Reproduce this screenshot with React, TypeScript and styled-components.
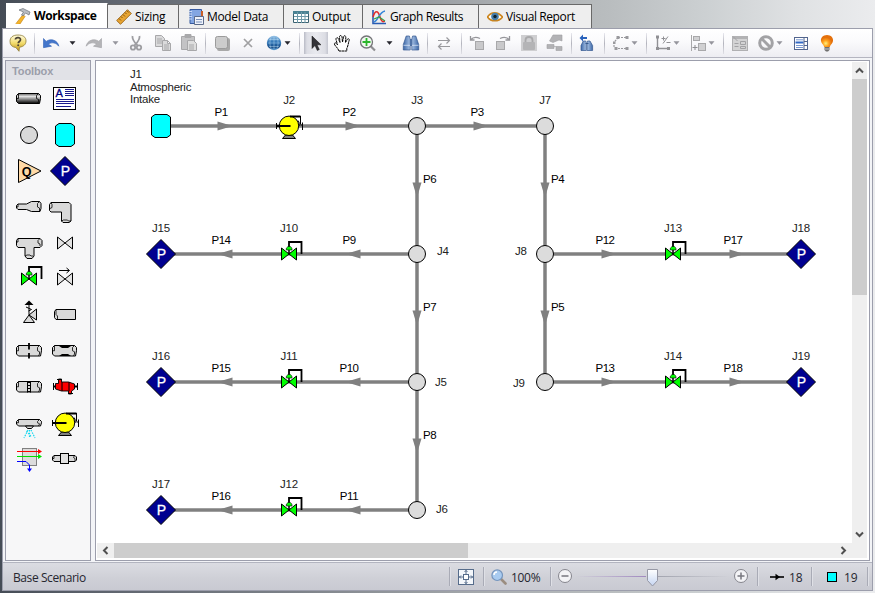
import React from 'react';
import styled, { createGlobalStyle } from 'styled-components';

const GlobalStyle = createGlobalStyle`
  * { box-sizing: border-box; }
  html, body, #root { height: 100%; }
  body { margin: 0; overflow: hidden; font: 12px/16px "Open Sans", "Noto Sans", sans-serif; color: #000; }
  svg { display: block; flex: none; }
`;

const Window = styled.div`
  width: 875px;
  height: 593px;
  padding: 3px 2px 2px;
  display: flex;
  flex-direction: column;
  background: linear-gradient(90deg, #454c56 0, #5c626c 90px, #7e838a 300px, #a9adb0 500px, #b9bdbf 610px, #cbcfd1 700px, #e0e2e4 800px, #ebecee 875px);
`;

const TabStrip = styled.nav`
  height: 25px;
  padding-left: 4px;
  display: flex;
  align-items: flex-end;
  flex: none;
`;

const Tab = styled.button<{ $width: number; $active?: boolean; $pad: number; $tight: number }>`
  width: ${p => p.$width}px;
  height: ${p => (p.$active ? 25 : 24)}px;
  padding: 0 0 0 ${p => p.$pad}px;
  border: 0;
  border-top: 1px solid ${p => (p.$active ? '#fff' : '#696969')};
  border-right: 1px solid #696969;
  background: ${p => (p.$active ? '#fff' : '#eeeeee')};
  display: flex;
  align-items: center;
  gap: 3px;
  font: ${p => (p.$active ? 700 : 400)} 12px/16px "Open Sans", sans-serif;
  letter-spacing: ${p => p.$tight}px;
  white-space: nowrap;
  color: #000;
`;

const Frame = styled.div`
  flex: 1;
  min-height: 0;
  display: flex;
  flex-direction: column;
  border: 1px solid #9c9eac;
  background: #f3f4f7;
`;

const ToolBar = styled.div`
  height: 29px;
  flex: none;
  display: flex;
  align-items: center;
  background: linear-gradient(#ffffff, #fafafc 45%, #ededf2);
  border-bottom: 1px solid #b4b5c0;
`;

const ToolButton = styled.button<{ $gap: number; $width: number; $pressed?: boolean }>`
  margin: 0 0 0 ${p => p.$gap}px;
  padding: 0;
  width: ${p => p.$width}px;
  height: 22px;
  border: 0;
  flex: none;
  display: flex;
  align-items: center;
  justify-content: center;
  background: ${p => (p.$pressed ? 'linear-gradient(90deg, #b9bbc6, #dcdde4 12%, #e9eaef 50%, #dcdde4 88%, #c3c5cf)' : 'none')};
`;

const ToolRule = styled.span<{ $gap: number }>`
  margin-left: ${p => p.$gap}px;
  width: 1px;
  height: 21px;
  flex: none;
  background: linear-gradient(#e8e8ee, #b4b5be, #e0e0e6);
`;

const Body = styled.main`
  flex: 1;
  min-height: 0;
  display: flex;
  gap: 4px;
  padding: 2px 2px 1px;
`;

const Toolbox = styled.aside`
  width: 86px;
  height: 501px;
  border: 1px solid #9c9eac;
  background: #f7f7f8;
  display: flex;
  flex-direction: column;
`;

const ToolboxTitle = styled.h2`
  margin: 0 0 1px;
  height: 19px;
  padding-left: 6px;
  font: 700 11px/20px "Liberation Sans", sans-serif;
  letter-spacing: -0.1px;
  color: #9b9eaa;
  background: #e1e2e7;
`;

const ToolboxGrid = styled.div`
  padding-left: 5px;
  display: grid;
  grid-template-columns: 36px 36px;
  grid-auto-rows: 36px;
`;

const Workspace = styled.section`
  flex: 1;
  min-width: 0;
  height: 501px;
  border: 1px solid #9c9eac;
  padding: 1px 2px 1px 1px;
  background: #fff;
  display: grid;
  grid-template-columns: 755px 15px;
  grid-template-rows: 481px 15px;
`;

const ScrollTrack = styled.div<{ $vertical?: boolean }>`
  background: #efefef;
  display: flex;
  flex-direction: ${p => (p.$vertical ? 'column' : 'row')};
  align-items: center;
`;

const ScrollThumb = styled.div<{ $width: number; $height: number }>`
  width: ${p => p.$width}px;
  height: ${p => p.$height}px;
  background: #cdcdcd;
`;

const Spring = styled.span`
  flex: 1;
`;

const Corner = styled.div`
  background: #efefef;
`;

const StatusBar = styled.footer`
  height: 28px;
  flex: none;
  display: flex;
  align-items: center;
  padding-left: 10px;
  border-top: 1px solid #b2b4bf;
  background: linear-gradient(#dbdce2, #cfd0d7 55%, #c9cad2);
  color: #26262f;
`;

const StatusText = styled.span<{ $width: number; $tight?: number }>`
  width: ${p => p.$width}px;
  position: relative;
  top: 1px;
  letter-spacing: ${p => p.$tight ?? -0.3}px;
  white-space: nowrap;
`;

const StatusCell = styled.div<{ $width: number; $pad: number; $gap: number }>`
  width: ${p => p.$width}px;
  height: 19px;
  flex: none;
  padding-left: ${p => p.$pad}px;
  display: flex;
  align-items: center;
  gap: ${p => p.$gap}px;
  border-left: 1px solid #a9abb6;
  box-shadow: inset 1px 0 #dfe0e6;
`;

const disabled = '#a8a8aa';

const toolIcons: Record<string, React.ReactNode> = {
  help: (
    <>
      <path d="M10 2C4.500 2 2 4.600 2 8.500c0 3.300 2 5.600 5.800 6l3.200 3.800.5-4C15.500 13.500 18 11.500 18 8c0-4-3-6-8-6z" fill="url(#gold)" stroke="#8f7e3a" strokeWidth=".8" />
      <path d="M7.400 6.500c.3-2.600 5.200-2.600 5.100.2 0 1.700-2.300 1.900-2.300 3.600" fill="none" stroke="#4a4235" strokeWidth="1.700" />
      <circle cx="10.200" cy="12.300" r="1" fill="#4a4235" />
    </>
  ),
  undo: <path d="M2.500 5.500v9.200l8-1.500-3-2c3-2.400 7.500-1.500 10.300 2C17 7.500 10 4.800 5.200 8.400z" fill="#4376cb" stroke="#2f5fb5" strokeWidth=".6" />,
  redo: <path d="M17.500 5.500v9.200l-8-1.500 3-2c-3-2.400-7.500-1.500-10.300 2C3 7.500 10 4.800 14.800 8.400z" fill="#b4b4b7" stroke="#a0a0a4" strokeWidth=".6" />,
  cut: (
    <g fill="none" stroke="#9d9da1" strokeWidth="1.800">
      <path d="M6.500 3c-.5 3 1.500 6 5 9.500M13.500 3c.5 3-1.500 6-5 9.500" />
      <circle cx="7" cy="14.500" r="2.200" /><circle cx="13" cy="14.500" r="2.200" />
    </g>
  ),
  copy: (
    <g fill="#dadadb" stroke={disabled}>
      <path d="M2.500 2.500h6l3 3v8h-9zM4 6h5M4 8h5M4 10h5" />
      <path d="M9.500 7.500h5l3 3v7h-8zM14.500 7.500v3h3M11 12h5M11 14h5M11 16h5" />
    </g>
  ),
  paste: (
    <g fill="#c3c3c5" stroke={disabled}>
      <path d="M2.500 3.500h13v13h-13z" /><path d="M6 1.500h6v3H6z" fill="#a8a8aa" />
      <path d="M8.500 7.500h6l3 3v7h-9zM10 12h5M10 14h5M10 16h5" fill="#dedede" />
    </g>
  ),
  square: (
    <>
      <rect x="5" y="5" width="13" height="13" rx="2" fill="#a8a8a8" />
      <rect x="3.500" y="3.500" width="12" height="12" rx="2" fill="#ccc" stroke="#9b9b9b" />
    </>
  ),
  remove: <path d="M6 6l8 8M14 6l-8 8" stroke="#a0a0a2" strokeWidth="1.700" />,
  globe: (
    <>
      <circle cx="10" cy="10" r="7.200" fill="url(#globe)" />
      <path d="M3.500 10h13M5 6.500h10M5 13.500h10M10 4v12M7 4.500c-1.500 4-1.500 7 0 11M13 4.500c1.500 4 1.500 7 0 11" fill="none" stroke="#bfe0f6" strokeWidth=".6" opacity=".75" />
    </>
  ),
  pointer: <path d="M6 3v12.500l3-3 2.300 5 2-1-2.300-4.700h4z" fill="#333338" stroke="#111" strokeWidth=".5" />,
  hand: <path d="M7 18c-1-3-4-5-4.700-7 .2-1.800 2-1.300 3.200.8L4 6.500c-.4-2 1.900-2.500 2.400-.7L8 9.500 7.500 4c0-2 2.300-2 2.500 0l.5 5 1-5c.3-2 2.500-1.500 2.300.3L13.500 9.500l1.700-3c.8-1.500 2.500-.8 2 .8-1 3-1 5.500-2.400 8V18z" fill="#fff" stroke="#000" strokeDasharray="2.500 .4" />,
  zoomIn: (
    <>
      <path d="M12.500 13l4.500 4.500" stroke="#8f8f92" strokeWidth="2.200" />
      <circle cx="8.500" cy="9" r="6" fill="#f0f8ef" stroke="#747478" strokeWidth="1.300" />
      <path d="M4.500 9h8M8.500 5v8" stroke="#2bb52b" strokeWidth="1.800" />
    </>
  ),
  binoculars: (
    <g stroke="#34588f" strokeWidth=".7">
      <path d="M8 6.500h4v6H8z" fill="#5d7fb2" />
      <path d="M5.200 3h3.200l.8 3v11H2.300v-5.500zM14.800 3h-3.200l-.8 3v11h6.900v-5.500z" fill="url(#blue)" />
      <path d="M2.500 12.300h6.500M11 12.300h6.500" stroke="#e4eefb" />
    </g>
  ),
  swap: <path d="M4 7.500h11.500M12.500 4.500l3 3-3 3M16 13.500H4.500M7.500 10.500l-3 3 3 3" fill="none" stroke="#99999d" strokeWidth="1.200" />,
  rotateLeft: (
    <>
      <path d="M2.500 3v4h4M2.500 7C5 4 8 3.500 12 5.500" fill="none" stroke="#96969a" strokeWidth="1.300" />
      <rect x="7.500" y="8.500" width="8" height="8" fill="#c9c9cb" stroke={disabled} />
    </>
  ),
  rotateRight: (
    <>
      <path d="M16.500 3v4h-4M16.500 7C14 4 11 3.500 7 5.500" fill="none" stroke="#96969a" strokeWidth="1.300" />
      <rect x="3.500" y="8.500" width="8" height="8" fill="#c9c9cb" stroke={disabled} />
    </>
  ),
  lock: (
    <>
      <rect x="2" y="2" width="16" height="16" fill="#cfcfd1" />
      <path d="M6.500 10V7c0-4 7-4 7 0v3" fill="none" stroke="#a9a9ab" strokeWidth="1.800" />
      <rect x="4" y="9" width="12" height="8" rx="1" fill="#b4b4b6" />
    </>
  ),
  sheet: (
    <g fill="#b2b2b5" stroke="#a0a0a3" strokeWidth=".6">
      <path d="M8 2h9v6l-3-1-6 2.500L4.500 8zM2 11.500h7v4H2zM11 13.500h6v4h-6z" />
      <path d="M9 13.500h2" />
    </g>
  ),
  findPipe: (
    <>
      <path d="M10 4H6V1.500L2.500 5 6 8.500V6h4z" fill="#2a63bc" />
      <path d="M6.200 8h2.600l.5 2V17.500H4v-5zM13 8h-2.500l-.4 2v7.500h5.500v-5z" fill="url(#blue)" stroke="#34588f" strokeWidth=".7" />
      <path d="M8.500 10.500h3" stroke="#34588f" />
    </>
  ),
  polygon: (
    <g stroke="#99999d" fill="none" strokeDasharray="2 1">
      <path d="M7 4.500h9M7 4.500L3 9.500v4l3 2h10" strokeWidth="1.200" />
      <path d="M5.500 3h3v3h-3zM14.500 3h3v3h-3zM2 8.500h2.500V11H2zM3.500 14h3v3h-3zM14.500 14h3v3h-3z" fill="#99999d" stroke="none" />
    </g>
  ),
  angle: (
    <g stroke="#909094" fill="none">
      <path d="M4.500 4v11.500H17" strokeWidth="1.400" />
      <path d="M3 2.500h3v3H3zM3 14h3v3H3zM14 14h3v3h-3z" fill="#909094" stroke="none" />
      <path d="M8.500 5.500h4M10.500 3.500v4M10 10.500l5-7M13.500 9.500h4" />
    </g>
  ),
  align: (
    <g stroke={disabled} fill="#d0d0d2">
      <path d="M3.500 2v16" /><rect x="5.500" y="3.500" width="6" height="4" /><rect x="10.500" y="10.500" width="7" height="7" />
      <path d="M4.500 14.500h5M7 12v5" stroke="#8e8e92" />
    </g>
  ),
  panel: (
    <>
      <rect x="2.500" y="3.500" width="15" height="14" fill="#d3d3d4" stroke="#b0b0b2" />
      <path d="M2 3h16v3H2z" fill="#b2b2b4" />
      <path d="M3 3.500l4.500 4.500M4.500 10.500h4M4.500 13.500h4M10.500 8.500h5v3h-5zM10.500 13.500h5v2h-5z" fill="none" stroke="#a2a2a5" />
    </>
  ),
  forbid: (
    <g fill="none" stroke="#a2a2a5" strokeWidth="3">
      <circle cx="10" cy="10" r="6.300" /><path d="M5.500 5.500l9 9" />
    </g>
  ),
  list: (
    <>
      <rect x="3.500" y="4.500" width="13" height="12" fill="#fff" stroke="#52658e" />
      <path d="M5 6.800h7M5 12.500h7M5 14.500h7" stroke="#7796cf" />
      <path d="M4.500 8.500h8v2h-8z" fill="#3268c4" /><path d="M13 4.500v12M13 8.500h4M13 12.500h4" stroke="#52658e" />
    </>
  ),
  bulb: (
    <>
      <path d="M7.500 13h5v4l-1.500 1.500H9L7.500 17z" fill="#6f6f6f" />
      <path d="M10 2c-4 0-6.500 2.800-6 6 .4 2.500 2.500 3.500 3.200 6h5.600c.7-2.500 2.800-3.500 3.200-6C16.500 4.800 14 2 10 2z" fill="url(#bulb)" />
      <path d="M8 16h4" stroke="#ddd" strokeWidth=".8" />
    </>
  ),
};

type ToolItem = [kind: string, gap: number];
const tools: ToolItem[] = [
  ['help', 5], ['|', 6], ['undo', 6], ['v', 8], ['redo', 8], ['vd', 8], ['cut', 7], ['copy', 7], ['paste', 6], ['|', 6],
  ['square', 6], ['remove', 6], ['globe', 6], ['v', 0], ['|', 8], ['pointer', 4], ['hand', 4], ['zoomIn', 6], ['v', 8],
  ['binoculars', 8], ['|', 6], ['swap', 6], ['|', 7], ['rotateLeft', 6], ['rotateRight', 5], ['lock', 6], ['sheet', 6],
  ['|', 6], ['findPipe', 5], ['|', 7], ['polygon', 6], ['vd', 0], ['|', 8], ['angle', 6], ['vd', 0], ['align', 8],
  ['vd', 0], ['|', 8], ['panel', 6], ['forbid', 6], ['vd', 0], ['list', 8], ['bulb', 6],
];

const GradientDefs = styled.svg`
  position: absolute;
`;

const Gradients = () => (
  <GradientDefs width="0" height="0">
    <defs>
      <linearGradient id="gold" x2="0" y2="1"><stop stopColor="#fffbe0" /><stop offset=".5" stopColor="#f2dc6c" /><stop offset="1" stopColor="#b98d16" /></linearGradient>
      <linearGradient id="globe" x2="0" y2="1"><stop stopColor="#9cc6e8" /><stop offset=".45" stopColor="#2b72b4" /><stop offset=".8" stopColor="#1a4f8a" /><stop offset="1" stopColor="#69aee0" /></linearGradient>
      <linearGradient id="blue"><stop stopColor="#3d68a8" /><stop offset=".5" stopColor="#b5cdec" /><stop offset="1" stopColor="#3d68a8" /></linearGradient>
      <radialGradient id="bulb" cx=".4" cy=".7"><stop stopColor="#fff07a" /><stop offset=".5" stopColor="#ffa21e" /><stop offset="1" stopColor="#e4700c" /></radialGradient>
      <linearGradient id="steel" x2="0" y2="1"><stop stopColor="#666" /><stop offset=".3" stopColor="#e0e0e0" /><stop offset="1" stopColor="#000" /></linearGradient>
      <linearGradient id="thumb" x2="0" y2="1"><stop stopColor="#fff" /><stop offset="1" stopColor="#c5d5f2" /></linearGradient>
    </defs>
  </GradientDefs>
);

const Tank = () => <path d="M-6-11.500H6L9.500-9V9L6 11.500H-6L-9.500 9V-9Z" fill="#00ffff" stroke="#000" strokeLinejoin="round" />;
const Diamond = () => (
  <>
    <path d="M0-14.500L14.500 0 0 14.500-14.500 0z" fill="#000090" stroke="#000" />
    <text x=".3" y="5" textAnchor="middle" fontFamily="Liberation Sans, sans-serif" fontSize="14" fill="#fff" stroke="#fff" strokeWidth=".3">P</text>
  </>
);
const Bowtie = ({ fill }: { fill: string }) => <path d="M-7.500-6v12L7.500-6v12z" fill={fill} stroke="#000" />;
const ControlValve = () => (
  <>
    <path d="M0-7v-5H12.500V0" fill="none" stroke="#000" strokeWidth="1.800" />
    <Bowtie fill="#00ff00" />
    <path d="M0-6v6" stroke="#000" strokeWidth="1.500" />
    <path d="M-2.700-4v-1.800L-1-7.500H1.300L3-5.800V-4z" fill="#00ff00" stroke="#000" strokeWidth=".6" />
  </>
);
const Pump = () => (
  <>
    <path d="M-3.500 9h7L6.500 12.500h-13z" fill="#808080" stroke="#000" />
    <circle r="9.700" cy="-.2" fill="#ffff00" stroke="#000" />
    <path d="M1-9.500h10.500M-12 0H1.500" fill="none" stroke="#000" strokeWidth="1.800" />
    <path d="M11.500-10v8.500M-12.500-3v6M13.500-3.500v7.500M11.500-1h2M9-5.500c1.500 2 1.500 4 1 5.500" fill="none" stroke="#000" />
  </>
);

const Tube = ({ x, y, w, h, fill = '#d9d9d9' }: { x: number; y: number; w: number; h: number; fill?: string }) => (
  <g stroke="#000" fill={fill}>
    <path d={`M${x + 2} ${y}H${x + w - 2}L${x + w} ${y + 2}V${y + h / 2}L${x + w - 1} ${y + h}H${x + 2}L${x} ${y + h - 2}V${y + 2}Z`} />
    <path d={`M${x + w - 2} ${y}L${x + w - 4} ${y + 2}V${y + h / 2}L${x + w - 2} ${y + h / 2 + 1}V${y + h - 2}L${x + w - 3} ${y + h}M${x + 2} ${y}V${y + h / 2}L${x} ${y + h / 2}`} fill="none" strokeWidth=".8" />
  </g>
);

const at = (node: React.ReactNode, x = 18, y = 18) => <g transform={`translate(${x} ${y})`}>{node}</g>;

const paletteIcons: React.ReactNode[] = [
  <Tube x={5.5} y={12.5} w={24} h={10} fill="url(#steel)" />,
  <>
    <rect x="6.500" y="6.500" width="22" height="22" fill="#fff" stroke="#000" />
    <path d="M18 8.500h9M18 10.500h9M18 12.500h9M18 14.500h9M9 18.500h18M9 20.500h18M9 22.500h18M9 25.500h15" stroke="#000080" strokeWidth=".9" />
    <text x="8.500" y="15.500" fontFamily="Liberation Sans" fontSize="11" fill="#000080" stroke="#000080" strokeWidth=".3">A</text>
  </>,
  <circle cx="18" cy="18" r="8.500" fill="#d9d9d9" stroke="#000" />,
  at(<Tank />),
  <>
    <path d="M7.500 6.500v23L30 18z" fill="#ffd9a6" stroke="#000" />
    <text x="15.500" y="22.500" textAnchor="middle" fontFamily="Liberation Sans" fontWeight="700" fontSize="12.500">Q</text>
  </>,
  at(<Diamond />),
  <>
    <path d="M7 15h8.500l5-2.500h8l1.500 2v5l-1 3h-8.500l-5-2H7L5.500 19v-2.500z" fill="#d9d9d9" stroke="#000" />
    <path d="M28.500 12.500l-2 2V18l2 1v3.500M7 15v3H5.500" fill="none" stroke="#000" strokeWidth=".8" />
  </>,
  <>
    <path d="M4 13.500h18l2 2V32l-2 1.500h-6L14.500 32v-9H4l-1.500-1.500v-6z" fill="#d9d9d9" stroke="#000" />
    <path d="M4 13.500l1 2v3l-2 1M14.500 32l2-1h4l1 1h2.500" fill="none" stroke="#000" strokeWidth=".8" />
  </>,
  <>
    <path d="M7 13.500h22l2 2v5l-2 2h-6V31l-2 2.500h-5L14 31v-8.500H7l-1.500-2v-5z" fill="#d9d9d9" stroke="#000" />
    <path d="M29 13.500l-2 2V18l2 1v2M7 13.500V17H5.500M14 31l2-1h3l1 1h2" fill="none" stroke="#000" strokeWidth=".8" />
  </>,
  at(<Bowtie fill="#e3e3e3" />),
  at(<ControlValve />),
  <>{at(<Bowtie fill="#e3e3e3" />)}<path d="M12 9.500h10M19.500 7l3 2.500-3 2.500" fill="none" stroke="#000" /></>,
  <>
    <path d="M18 18l-5.500 7.500h11zM18 18l7.500-6v11z" fill="#d9d9d9" stroke="#000" />
    <path d="M18 18V7M15 10l5.500 2.500-3 1.500" fill="none" stroke="#000" /><path d="M18 3.500l4.500 4.500h-9z" />
  </>,
  <>
    <path d="M9 12.500h19.500v10H9l-1.500-2v-6z" fill="#d9d9d9" stroke="#000" />
    <path d="M9 12.500v5l1.500 1.500v3.500" fill="none" stroke="#000" strokeWidth=".8" />
  </>,
  <><Tube x={5.5} y={12.5} w={25} h={10.5} /><path d="M18 10v6.500M18 20v5.500" stroke="#000" strokeWidth="1.800" /></>,
  <><Tube x={5.5} y={12.5} w={24} h={10.5} /><path d="M12 13h12l-3 2h-6zM12 23l3-2h6l3 2z" /></>,
  <><Tube x={5.5} y={12.5} w={25} h={10.5} /><path d="M16.500 12.500v11M19.500 12.500v11" stroke="#000" /><path d="M18 13v10" stroke="#000" strokeDasharray="1 2" strokeWidth="3" /></>,
  <>
    <path d="M6 17.500h24" stroke="#000" strokeWidth="2" /><path d="M6.500 14v7M30.500 14v7" stroke="#000" />
    <path d="M8.500 14.500h3V10h3v3h7l6 2v5l-3 2v3h-3v-3h-7l-6-2z" fill="#f00" stroke="#000" strokeWidth=".9" />
    <path d="M15 13v9M22 13v9M10 10.500h5M21 24.500h5" stroke="#000" />
  </>,
  <>
    <Tube x={5.5} y={14.5} w={25} h={6.5} />
    <path d="M14.500 21l2 2.500h4l2-2.500z" fill="#d9d9d9" stroke="#000" />
    <path d="M17 25l-4 8M18.500 25v8M20 25l4 8M15.500 26l5 6" stroke="#16d7ee" strokeDasharray="1.500 1.200" strokeWidth="1.200" />
  </>,
  at(<Pump />),
  <>
    <rect x="11.500" y="7.500" width="14" height="17" fill="#dcdcdc" stroke="#808080" />
    <path d="M6 10.500h22" stroke="#f00" /><path d="M27 8l4 2.500-4 2.500z" fill="#f00" />
    <path d="M6 15.500h22" stroke="#00e000" /><path d="M27 13l4 2.500-4 2.500z" fill="#00e000" />
    <path d="M6 20.500h9l3.500 3.500v4" stroke="#00f" fill="none" /><path d="M16 27.500h5L18.500 31z" fill="#00f" />
  </>,
  <>
    <path d="M7 14.500h21l1.500 1.500v3L28 20.500H7L5.500 19v-3z" fill="#d9d9d9" stroke="#000" />
    <rect x="13.500" y="12.500" width="8" height="10" fill="#e3e3e3" stroke="#000" />
    <path d="M27.500 14.500l-1 2 1.500 1v3M7 14.500v3H5.500" fill="none" stroke="#000" strokeWidth=".8" />
  </>,
];

type Kind = 'branch' | 'pressure' | 'valve' | 'tank' | 'pump';
interface Junction { id: string; kind: Kind; x: number; y: number; label?: [number, number] }
const junctions: Junction[] = [
  { id: 'J1', kind: 'tank', x: 161, y: 126 },
  { id: 'J2', kind: 'pump', x: 289, y: 126 },
  { id: 'J3', kind: 'branch', x: 417, y: 126 },
  { id: 'J7', kind: 'branch', x: 545, y: 126 },
  { id: 'J15', kind: 'pressure', x: 161, y: 254 },
  { id: 'J10', kind: 'valve', x: 289, y: 254 },
  { id: 'J4', kind: 'branch', x: 417, y: 254, label: [437, 255] },
  { id: 'J8', kind: 'branch', x: 545, y: 254, label: [515, 255] },
  { id: 'J13', kind: 'valve', x: 673, y: 254 },
  { id: 'J18', kind: 'pressure', x: 801, y: 254 },
  { id: 'J16', kind: 'pressure', x: 161, y: 382 },
  { id: 'J11', kind: 'valve', x: 289, y: 382 },
  { id: 'J5', kind: 'branch', x: 417, y: 382, label: [435, 386] },
  { id: 'J9', kind: 'branch', x: 545, y: 382, label: [513, 387] },
  { id: 'J14', kind: 'valve', x: 673, y: 382 },
  { id: 'J19', kind: 'pressure', x: 801, y: 382 },
  { id: 'J17', kind: 'pressure', x: 161, y: 510 },
  { id: 'J12', kind: 'valve', x: 289, y: 510 },
  { id: 'J6', kind: 'branch', x: 417, y: 510, label: [436, 513] },
];

const pipes: [id: string, from: string, to: string][] = [
  ['P1', 'J1', 'J2'], ['P2', 'J2', 'J3'], ['P3', 'J3', 'J7'], ['P4', 'J7', 'J8'], ['P5', 'J8', 'J9'], ['P6', 'J3', 'J4'],
  ['P7', 'J4', 'J5'], ['P8', 'J5', 'J6'], ['P9', 'J4', 'J10'], ['P10', 'J5', 'J11'], ['P11', 'J6', 'J12'],
  ['P12', 'J8', 'J13'], ['P13', 'J9', 'J14'], ['P14', 'J10', 'J15'], ['P15', 'J11', 'J16'], ['P16', 'J12', 'J17'],
  ['P17', 'J13', 'J18'], ['P18', 'J14', 'J19'],
];

const symbols: Record<Kind, React.ReactNode> = {
  branch: <circle r="8.500" fill="#dcdcdc" stroke="#000" />,
  pressure: <Diamond />,
  valve: <ControlValve />,
  tank: <Tank />,
  pump: <Pump />,
};

const PipeLabel = styled.text`
  font: 11.5px "Liberation Sans", Arial, sans-serif;
  letter-spacing: -0.45px;
  fill: #000;
`;

const JunctionLabel = styled(PipeLabel)`
  letter-spacing: -0.25px;
  fill: #222;
`;

const Diagram = () => {
  const find = (id: string) => junctions.find(j => j.id === id)!;
  return (
    <svg width="755" height="481" viewBox="97 62 755 481">
      {pipes.map(([id, from, to]) => {
        const a = find(from);
        const b = find(to);
        const mx = (a.x + b.x) / 2;
        const my = (a.y + b.y) / 2;
        const vertical = a.x === b.x;
        const turn = vertical ? 90 : b.x > a.x ? 0 : 180;
        return (
          <g key={id}>
            <path d={`M${a.x} ${a.y}L${b.x} ${b.y}`} stroke="#a0a0a0" strokeWidth="4" />
            <path d={`M${a.x} ${a.y}L${b.x} ${b.y}`} stroke="#808080" strokeWidth="2" />
            <path d="M-7.500-4.500L7.500 0-7.500 4.500z" fill="#808080" transform={`translate(${mx} ${my}) rotate(${turn})`} />
            <PipeLabel x={vertical ? mx + 6 : mx - 4} y={vertical ? my - 7 : my - 10} textAnchor={vertical ? 'start' : 'middle'}>{id}</PipeLabel>
          </g>
        );
      })}
      {junctions.map(j => (
        <g key={j.id}>
          {at(symbols[j.kind], j.x, j.y)}
          {j.kind !== 'tank' && (
            <JunctionLabel x={j.label ? j.label[0] : j.x} y={j.label ? j.label[1] : j.y - 22} textAnchor={j.label ? 'start' : 'middle'}>{j.id}</JunctionLabel>
          )}
        </g>
      ))}
      <JunctionLabel x="130" y="78">J1</JunctionLabel>
      <JunctionLabel x="130" y="91">Atmospheric</JunctionLabel>
      <JunctionLabel x="130" y="103">Intake</JunctionLabel>
    </svg>
  );
};

const Chevron = ({ turn }: { turn: number }) => (
  <svg width="17" height="17" viewBox="-8.500 -8.500 17 17">
    <path d="M-3.500 2L0-1.500 3.500 2" transform={`rotate(${turn})`} fill="none" stroke="#505050" strokeWidth="2" />
  </svg>
);

const tabs: { label: string; width: number; pad: number; tight: number; icon: React.ReactNode }[] = [
  {
    label: 'Workspace', width: 102, pad: 9, tight: -0.38,
    icon: <><path d="M1 15.500l7-9 2 2-5 7.500-3 .5z" fill="#f5b52b" stroke="#bd7b11" strokeWidth=".6" /><path d="M4 2l4-1.500 4 2 3 1.500-1 3-3.500-2L8 8 6.500 7l2-3z" fill="#b9bdc3" stroke="#6c7178" strokeWidth=".7" /></>,
  },
  {
    label: 'Sizing', width: 71, pad: 8, tight: -0.3,
    icon: <><path d="M.7 11.500L11.500.7l3.800 3.800L4.500 15.300z" fill="#e8a532" stroke="#9c6312" strokeWidth=".9" /><path d="M3 9.500l2 2M5 7.500l1.500 1.500M7 5.500l2 2M9 3.500L10.500 5M11 1.800l1.700 1.700" stroke="#7c4c08" strokeWidth=".9" /></>,
  },
  {
    label: 'Model Data', width: 105, pad: 9, tight: -0.35,
    icon: <><path d="M2 .5h11.500v14H2z" fill="#83a6e2" stroke="#365a9f" /><path d="M1 2.500h3M1 5h3M1 7.500h3M1 10h3" stroke="#c9daf5" strokeWidth="1.200" /><path d="M13 2h2v5h-2z" fill="#c85f28" /><path d="M6.500 7.500h9v8h-9z" fill="#eef2fa" stroke="#5b6b8a" /><path d="M8 10.500h6M8 13h6" stroke="#7890bb" /></>,
  },
  {
    label: 'Output', width: 79, pad: 9, tight: -0.25,
    icon: <><path d="M.5 2.500h15v11H.5z" fill="#fff" stroke="#3b6272" /><path d="M0 2h16v3H0z" fill="#4a8293" /><path d="M4.500 3v11M8.500 3v11M12 3v11M1 7.500h14M1 10.500h14" stroke="#6f9aa9" /></>,
  },
  {
    label: 'Graph Results', width: 116, pad: 8, tight: -0.4,
    icon: <><path d="M2 1v13.500h13" fill="none" stroke="#295bb3" strokeWidth="1.600" /><path d="M2 8c2-7 5-7 7 0s4 4 5 4" fill="none" stroke="#e12b2b" strokeWidth="1.600" /><path d="M3 13c4-1 5-10 11-11" fill="none" stroke="#3586d8" strokeWidth="1.600" /><path d="M3 10l5-2 6 4" fill="none" stroke="#36a548" strokeWidth="1.200" /></>,
  },
  {
    label: 'Visual Report', width: 113, pad: 8, tight: -0.4,
    icon: <><path d="M.5 8C4 2.500 11 2.500 15.500 8 11.500 13 4 13 .5 8z" fill="#fff" stroke="#cc851c" strokeWidth="1.600" /><circle cx="8" cy="7.500" r="3.800" fill="#467eaa" /><circle cx="8" cy="7.500" r="1.700" fill="#10222f" /></>,
  },
];

export default function App() {
  return (
    <Window>
      <GlobalStyle />
      <Gradients />
      <TabStrip>
        {tabs.map((t, i) => (
          <Tab key={t.label} $width={t.width} $active={i === 0} $pad={t.pad} $tight={t.tight}>
            <svg width="16" height="16">{t.icon}</svg>
            {t.label}
          </Tab>
        ))}
      </TabStrip>
      <Frame>
        <ToolBar>
          {tools.map(([kind, gap], i) => {
            if (kind === '|') return <ToolRule key={i} $gap={gap} />;
            if (kind === 'v' || kind === 'vd') {
              return (
                <ToolButton key={i} $gap={gap} $width={7}>
                  <svg width="7" height="5"><path d="M1 .5h5L3.500 3.500z" fill={kind === 'v' ? '#25252d' : '#95959c'} stroke={kind === 'v' ? '#25252d' : '#95959c'} strokeWidth=".5" /></svg>
                </ToolButton>
              );
            }
            return (
              <ToolButton key={i} $gap={gap} $width={kind === 'pointer' ? 24 : 20} $pressed={kind === 'pointer'}>
                <svg width="20" height="20">{toolIcons[kind]}</svg>
              </ToolButton>
            );
          })}
        </ToolBar>
        <Body>
          <Toolbox>
            <ToolboxTitle>Toolbox</ToolboxTitle>
            <ToolboxGrid>
              {paletteIcons.map((icon, i) => <svg key={i} width="36" height="36">{icon}</svg>)}
            </ToolboxGrid>
          </Toolbox>
          <Workspace>
            <Diagram />
            <ScrollTrack $vertical>
              <Chevron turn={0} />
              <ScrollThumb $width={15} $height={216} />
              <Spring />
              <Chevron turn={180} />
            </ScrollTrack>
            <ScrollTrack>
              <Chevron turn={-90} />
              <ScrollThumb $width={354} $height={15} />
              <Spring />
              <Chevron turn={90} />
            </ScrollTrack>
            <Corner />
          </Workspace>
        </Body>
        <StatusBar>
          <StatusText $width={436} $tight={-0.42}>Base Scenario</StatusText>
          <StatusCell $width={34} $pad={8} $gap={0}>
            <svg width="16" height="16">
              <rect x=".5" y=".5" width="15" height="15" fill="#f4f7fb" stroke="#566c8b" />
              <rect x="5.500" y="5.500" width="5" height="5" fill="#fff" stroke="#566c8b" />
              <path d="M8 1v4M8 11v4M1 8h4M11 8h4M6.500 3L8 1.500 9.500 3M6.500 13L8 14.500 9.500 13M3 6.500L1.500 8 3 9.500M13 6.500L14.500 8 13 9.500" fill="none" stroke="#566c8b" />
            </svg>
          </StatusCell>
          <StatusCell $width={67} $pad={7} $gap={4}>
            <svg width="16" height="16">
              <path d="M9.500 9.500l5 5" stroke="#9b8d80" strokeWidth="2.600" strokeLinecap="round" />
              <circle cx="6.200" cy="6.200" r="5.300" fill="#a9cbf0" stroke="#7695bd" strokeWidth="1.200" />
              <path d="M3 6c0-2 1.500-3 3-3" fill="none" stroke="#fff" strokeWidth="1.500" />
            </svg>
            <StatusText $width={32} $tight={-0.3}>100%</StatusText>
          </StatusCell>
          <StatusCell $width={207} $pad={0} $gap={0}>
            <svg width="206" height="22" viewBox="551 566 206 22">
              <defs>
                <linearGradient id="done" gradientUnits="userSpaceOnUse" x1="576" x2="645"><stop stopColor="#a890c8" stopOpacity="0" /><stop offset="1" stopColor="#a18abf" /></linearGradient>
                <linearGradient id="rest" gradientUnits="userSpaceOnUse" x1="655" x2="730"><stop stopColor="#a1a3ae" /><stop offset="1" stopColor="#a1a3ae" stopOpacity="0" /></linearGradient>
              </defs>
              <path d="M576 576h70v1h-70z" fill="url(#done)" /><path d="M658 576h72v1h-72z" fill="url(#rest)" />
              <g fill="#f3f3f6" stroke="#85858d"><circle cx="565" cy="576" r="6.500" /><circle cx="741" cy="576" r="6.500" /></g>
              <path d="M561.500 576h7M737.500 576h7M741 572.500v7" stroke="#77777f" strokeWidth="1.500" />
              <path d="M647.500 569.500h10v11l-5 5.500-5-5.500z" fill="url(#thumb)" stroke="#9698a5" />
            </svg>
          </StatusCell>
          <StatusCell $width={54} $pad={12} $gap={5}>
            <svg width="14" height="10"><path d="M0 5h14" stroke="#000" strokeWidth="1.600" /><path d="M5.500 1.800L10 5 5.500 8.200z" /></svg>
            <StatusText $width={16} $tight={-0.2}>18</StatusText>
          </StatusCell>
          <StatusCell $width={56} $pad={15} $gap={7}>
            <svg width="10" height="10"><rect x=".5" y=".5" width="9" height="9" fill="#0ff" stroke="#000" /></svg>
            <StatusText $width={16} $tight={-0.2}>19</StatusText>
          </StatusCell>
          <StatusCell $width={3} $pad={0} $gap={0} />
        </StatusBar>
      </Frame>
    </Window>
  );
}
